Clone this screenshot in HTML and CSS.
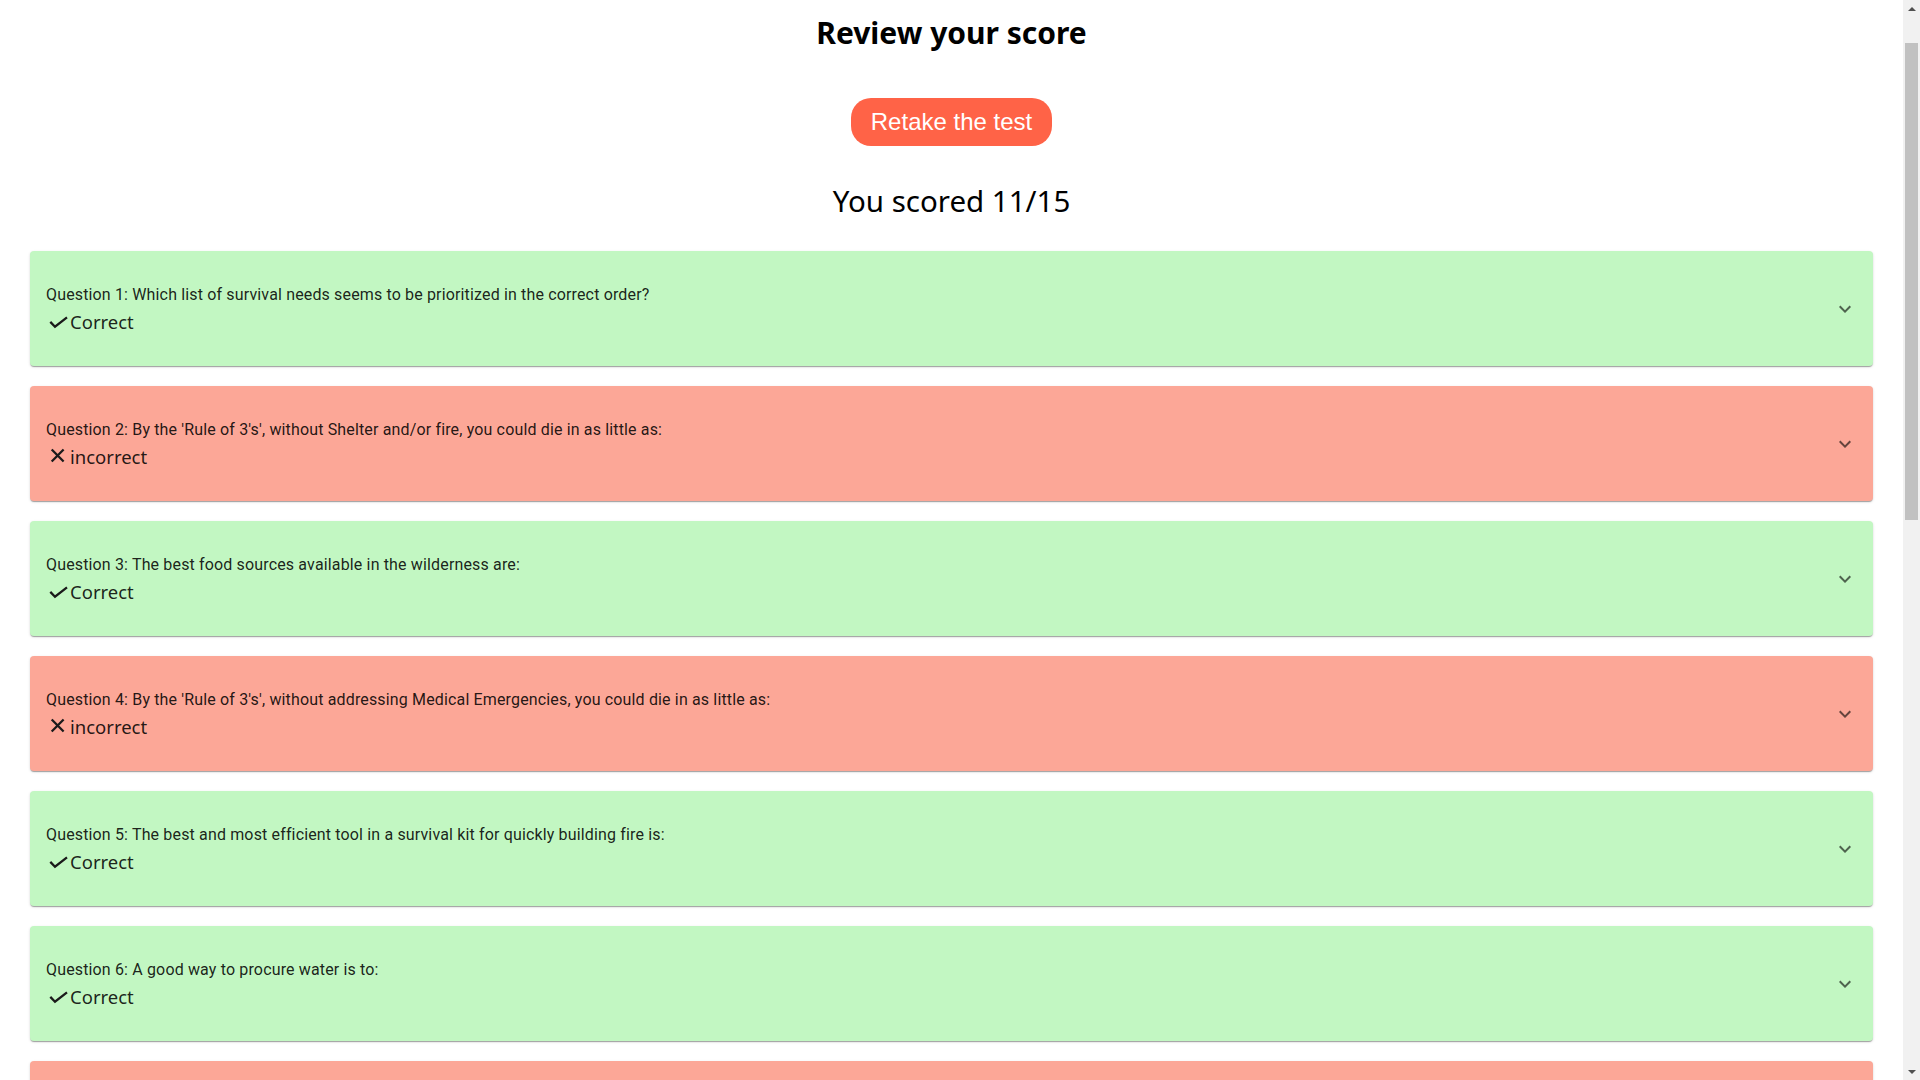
FILE: index.html
```html
<!DOCTYPE html>
<html lang="en">
<head>
<meta charset="utf-8">
<title>Review your score</title>
<link rel="stylesheet" href="styles.css">
</head>
<body>
<div class="app">
<main class="page">
  <h1 class="title">Review your score</h1>
  <button class="retake" type="button">Retake the test</button>
  <h2 class="score">You scored 11/15</h2>

  <section class="list">
    <div class="card card-correct">
      <div class="card-body">
        <p class="question">Question 1: Which list of survival needs seems to be prioritized in the correct order?</p>
        <p class="result"><svg class="mark" viewBox="0 0 24 24"><polyline points="4.3,12.9 9,17.7 21,8.4"/></svg>Correct</p>
      </div>
      <svg class="chevron" viewBox="0 0 24 24"><path d="M16.59 8.59 12 13.17 7.41 8.59 6 10l6 6 6-6z"/></svg>
    </div>

    <div class="card card-wrong">
      <div class="card-body">
        <p class="question">Question 2: By the 'Rule of 3's', without Shelter and/or fire, you could die in as little as:</p>
        <p class="result"><svg class="mark" viewBox="0 0 24 24"><path d="M5.7 5.5 17.6 17.5M17.6 5.5 5.7 17.5"/></svg>incorrect</p>
      </div>
      <svg class="chevron" viewBox="0 0 24 24"><path d="M16.59 8.59 12 13.17 7.41 8.59 6 10l6 6 6-6z"/></svg>
    </div>

    <div class="card card-correct">
      <div class="card-body">
        <p class="question">Question 3: The best food sources available in the wilderness are:</p>
        <p class="result"><svg class="mark" viewBox="0 0 24 24"><polyline points="4.3,12.9 9,17.7 21,8.4"/></svg>Correct</p>
      </div>
      <svg class="chevron" viewBox="0 0 24 24"><path d="M16.59 8.59 12 13.17 7.41 8.59 6 10l6 6 6-6z"/></svg>
    </div>

    <div class="card card-wrong">
      <div class="card-body">
        <p class="question">Question 4: By the 'Rule of 3's', without addressing Medical Emergencies, you could die in as little as:</p>
        <p class="result"><svg class="mark" viewBox="0 0 24 24"><path d="M5.7 5.5 17.6 17.5M17.6 5.5 5.7 17.5"/></svg>incorrect</p>
      </div>
      <svg class="chevron" viewBox="0 0 24 24"><path d="M16.59 8.59 12 13.17 7.41 8.59 6 10l6 6 6-6z"/></svg>
    </div>

    <div class="card card-correct">
      <div class="card-body">
        <p class="question">Question 5: The best and most efficient tool in a survival kit for quickly building fire is:</p>
        <p class="result"><svg class="mark" viewBox="0 0 24 24"><polyline points="4.3,12.9 9,17.7 21,8.4"/></svg>Correct</p>
      </div>
      <svg class="chevron" viewBox="0 0 24 24"><path d="M16.59 8.59 12 13.17 7.41 8.59 6 10l6 6 6-6z"/></svg>
    </div>

    <div class="card card-correct">
      <div class="card-body">
        <p class="question">Question 6: A good way to procure water is to:</p>
        <p class="result"><svg class="mark" viewBox="0 0 24 24"><polyline points="4.3,12.9 9,17.7 21,8.4"/></svg>Correct</p>
      </div>
      <svg class="chevron" viewBox="0 0 24 24"><path d="M16.59 8.59 12 13.17 7.41 8.59 6 10l6 6 6-6z"/></svg>
    </div>

    <div class="card card-wrong">
      <div class="card-body">
        <p class="question">Question 7: By the 'Rule of 3's', without water, you could die in as little as:</p>
        <p class="result"><svg class="mark" viewBox="0 0 24 24"><path d="M5.7 5.5 17.6 17.5M17.6 5.5 5.7 17.5"/></svg>incorrect</p>
      </div>
      <svg class="chevron" viewBox="0 0 24 24"><path d="M16.59 8.59 12 13.17 7.41 8.59 6 10l6 6 6-6z"/></svg>
    </div>

    <div class="card card-correct">
      <div class="card-body">
        <p class="question">Question 8: The most important item to carry in the wilderness is:</p>
        <p class="result"><svg class="mark" viewBox="0 0 24 24"><polyline points="4.3,12.9 9,17.7 21,8.4"/></svg>Correct</p>
      </div>
      <svg class="chevron" viewBox="0 0 24 24"><path d="M16.59 8.59 12 13.17 7.41 8.59 6 10l6 6 6-6z"/></svg>
    </div>

    <div class="card card-correct">
      <div class="card-body">
        <p class="question">Question 9: The most effective way to signal for rescue is:</p>
        <p class="result"><svg class="mark" viewBox="0 0 24 24"><polyline points="4.3,12.9 9,17.7 21,8.4"/></svg>Correct</p>
      </div>
      <svg class="chevron" viewBox="0 0 24 24"><path d="M16.59 8.59 12 13.17 7.41 8.59 6 10l6 6 6-6z"/></svg>
    </div>

    <div class="card card-correct">
      <div class="card-body">
        <p class="question">Question 10: When you realize you are lost, the first thing you should do is:</p>
        <p class="result"><svg class="mark" viewBox="0 0 24 24"><polyline points="4.3,12.9 9,17.7 21,8.4"/></svg>Correct</p>
      </div>
      <svg class="chevron" viewBox="0 0 24 24"><path d="M16.59 8.59 12 13.17 7.41 8.59 6 10l6 6 6-6z"/></svg>
    </div>

    <div class="card card-correct">
      <div class="card-body">
        <p class="question">Question 11: The best material for tinder is:</p>
        <p class="result"><svg class="mark" viewBox="0 0 24 24"><polyline points="4.3,12.9 9,17.7 21,8.4"/></svg>Correct</p>
      </div>
      <svg class="chevron" viewBox="0 0 24 24"><path d="M16.59 8.59 12 13.17 7.41 8.59 6 10l6 6 6-6z"/></svg>
    </div>

    <div class="card card-wrong">
      <div class="card-body">
        <p class="question">Question 12: By the 'Rule of 3's', without food, you could die in as little as:</p>
        <p class="result"><svg class="mark" viewBox="0 0 24 24"><path d="M5.7 5.5 17.6 17.5M17.6 5.5 5.7 17.5"/></svg>incorrect</p>
      </div>
      <svg class="chevron" viewBox="0 0 24 24"><path d="M16.59 8.59 12 13.17 7.41 8.59 6 10l6 6 6-6z"/></svg>
    </div>

    <div class="card card-correct">
      <div class="card-body">
        <p class="question">Question 13: The safest way to purify water found in the wild is to:</p>
        <p class="result"><svg class="mark" viewBox="0 0 24 24"><polyline points="4.3,12.9 9,17.7 21,8.4"/></svg>Correct</p>
      </div>
      <svg class="chevron" viewBox="0 0 24 24"><path d="M16.59 8.59 12 13.17 7.41 8.59 6 10l6 6 6-6z"/></svg>
    </div>

    <div class="card card-correct">
      <div class="card-body">
        <p class="question">Question 14: A good location for building a shelter is:</p>
        <p class="result"><svg class="mark" viewBox="0 0 24 24"><polyline points="4.3,12.9 9,17.7 21,8.4"/></svg>Correct</p>
      </div>
      <svg class="chevron" viewBox="0 0 24 24"><path d="M16.59 8.59 12 13.17 7.41 8.59 6 10l6 6 6-6z"/></svg>
    </div>

    <div class="card card-correct">
      <div class="card-body">
        <p class="question">Question 15: The best way to prevent hypothermia is to:</p>
        <p class="result"><svg class="mark" viewBox="0 0 24 24"><polyline points="4.3,12.9 9,17.7 21,8.4"/></svg>Correct</p>
      </div>
      <svg class="chevron" viewBox="0 0 24 24"><path d="M16.59 8.59 12 13.17 7.41 8.59 6 10l6 6 6-6z"/></svg>
    </div>
  </section>
</main>
<aside class="scrollbar" aria-hidden="true">
  <div class="sb-button"><span class="sb-arrow-up"></span></div>
  <div class="sb-track"><div class="sb-thumb"></div></div>
  <div class="sb-button"><span class="sb-arrow-down"></span></div>
</aside>
</div>
</body>
</html>
```

FILE: styles.css
```css
html {
  background: #ffffff;
}

body {
  margin: 0;
  font-family: "Noto Sans", "Open Sans", sans-serif;
  color: #000;
}

.app {
  display: flex;
  align-items: flex-start;
}

.page {
  flex: 1;
  min-width: 0;
  display: flex;
  flex-direction: column;
  align-items: center;
  padding: 0 30px 132px;
}

.title {
  margin: 0;
  padding-top: 13px;
  font-size: 30px;
  line-height: 40px;
  font-weight: 700;
  text-align: center;
}

.retake {
  margin-top: 45px;
  height: 48px;
  padding: 0 20px;
  border: 0;
  border-radius: 20px;
  background: #ff6347;
  color: #ffffff;
  font-family: "Liberation Sans", Arial, sans-serif;
  font-size: 24px;
  line-height: 28px;
  cursor: pointer;
}

.score {
  margin: 35px 0 0;
  font-size: 29.5px;
  line-height: 40px;
  font-weight: 400;
  text-align: center;
}

.list {
  align-self: stretch;
  display: flex;
  flex-direction: column;
  gap: 20px;
  margin-top: 30px;
}

.card {
  display: flex;
  align-items: center;
  height: 115px;
  box-sizing: border-box;
  padding: 0 16px;
  border-radius: 4px;
  box-shadow: 0 2px 1px -1px rgba(0, 0, 0, 0.2), 0 1px 1px 0 rgba(0, 0, 0, 0.14), 0 1px 3px 0 rgba(0, 0, 0, 0.12);
}

.card-correct {
  background: #c2f7c2;
}

.card-wrong {
  background: #fca797;
}

.card-body {
  flex: 1;
  padding: 32px 0 30px;
}

.question {
  margin: 0;
  font-family: Roboto, "Liberation Sans", sans-serif;
  font-size: 16px;
  line-height: 24px;
  letter-spacing: 0.15px;
  color: rgba(0, 0, 0, 0.87);
}

.result {
  margin: 0;
  display: flex;
  align-items: center;
  font-size: 18.5px;
  line-height: 29px;
  color: rgba(0, 0, 0, 0.87);
}

.mark {
  width: 24px;
  height: 24px;
  flex: none;
  margin-top: -1px;
  fill: none;
  stroke: #1a1a1a;
  stroke-width: 2.3;
}

.chevron {
  width: 24px;
  height: 24px;
  flex: none;
  fill: rgba(0, 0, 0, 0.6);
}

/* browser-style vertical scrollbar at the right edge */
.scrollbar {
  position: sticky;
  top: 0;
  flex: none;
  width: 17px;
  height: 100vh;
  display: flex;
  flex-direction: column;
  background: #f1f1f1;
}

.sb-button {
  flex: none;
  height: 17px;
  display: flex;
  align-items: center;
  justify-content: center;
}

.sb-arrow-up {
  width: 0;
  height: 0;
  border-left: 4px solid transparent;
  border-right: 4px solid transparent;
  border-bottom: 4px solid #505050;
}

.sb-arrow-down {
  width: 0;
  height: 0;
  border-left: 4px solid transparent;
  border-right: 4px solid transparent;
  border-top: 4px solid #505050;
}

.sb-track {
  flex: 1;
  padding: 26px 2px 0;
}

.sb-thumb {
  height: 477px;
  background: #c1c1c1;
}
```
